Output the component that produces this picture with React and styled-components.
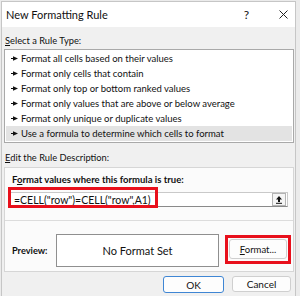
import React from "react";
import styled, { createGlobalStyle } from "styled-components";

const GlobalStyle = createGlobalStyle`
  html, body { margin: 0; padding: 0; background: #ebebeb; }
  body {
    width: 300px;
    height: 296px;
    overflow: hidden;
    font-family: Lato, "Noto Sans", sans-serif;
    color: #111;
  }
`;

const Window = styled.div`
  margin: 1px 0 0 1px;
  width: 295px;
  height: 295px;
  box-sizing: border-box;
  border: 1px solid #c6c6c6;
  border-bottom: none;
  background: #f0f0f0;
  display: flex;
  flex-direction: column;
`;

const TitleBar = styled.div`
  height: 25px;
  background: #fff;
  display: flex;
  align-items: center;
  padding-left: 4px;
`;

const Title = styled.div`
  font-size: 11px;
  flex: 1;
`;

const Help = styled.span`
  font-size: 12px;
  margin-right: 30px;
`;

const CloseIcon = styled.svg`
  width: 9px;
  height: 9px;
  margin-right: 7px;
`;

const Body = styled.div`
  flex: 1;
  padding: 0 1px 0 2px;
  display: flex;
  flex-direction: column;
`;

const SectionLabel = styled.div`
  font-size: 9.3px;
  line-height: 14px;
  margin-top: ${(p) => p.$top}px;
  margin-left: 1px;
`;

const Key = styled.span`
  text-decoration: underline;
  text-underline-offset: 1px;
`;

const ListBox = styled.div`
  margin-top: 1px;
  border: 1px solid #a9a9a9;
  background: #fff;
  padding: 1px;
`;

const ListRow = styled.div`
  height: 15px;
  display: flex;
  align-items: center;
  padding-left: 5px;
  font-size: 9.5px;
  background: ${(p) => (p.$selected ? "#e3e3e3" : "transparent")};
`;

const Arrow = styled.svg`
  width: 7px;
  height: 5px;
  margin-right: 3px;
  flex: none;
`;

const GroupBox = styled.div`
  margin-top: 2px;
  border: 1px solid #d6d6d6;
  background: #fbfbfb;
  display: flex;
  flex-direction: column;
`;

const FormulaSection = styled.div`
  padding: 5px 5px 13px 5px;
  border-bottom: 1px solid #dcdcdc;
`;

const BoldLabel = styled.div`
  font-size: 9.5px;
  font-weight: 700;
  line-height: 14px;
  padding-left: 2px;
`;

const FormulaRow = styled.div`
  position: relative;
  margin-top: 5px;
`;

const FormulaInput = styled.div`
  height: 15px;
  box-sizing: border-box;
  border: 1px solid #c9c9c9;
  border-bottom-color: #8a8a8a;
  background: #fff;
  display: flex;
  align-items: center;
  padding-left: 3px;
  font-size: 10.5px;
`;

const FormulaText = styled.span`
  flex: 1;
`;

const RefButton = styled.div`
  width: 14px;
  height: 13px;
  box-sizing: border-box;
  border: 1px solid #b3b3b3;
  background: #f5f5f5;
  display: flex;
  align-items: center;
  justify-content: center;
  margin-right: 1px;
`;

const RedMark = styled.div`
  position: absolute;
  left: -2px;
  top: -5px;
  width: 150px;
  height: 21px;
  box-sizing: border-box;
  border: 3px solid #e8101c;
  pointer-events: none;
`;

const PreviewSection = styled.div`
  display: flex;
  align-items: center;
  padding: 13px 0 4px 7px;
`;

const PreviewLabel = styled.div`
  width: 44px;
  font-size: 9.2px;
  font-weight: 700;
`;

const PreviewBox = styled.div`
  width: 163px;
  height: 33px;
  box-sizing: border-box;
  border: 1px solid #8f8f8f;
  background: #fff;
  display: flex;
  align-items: center;
  justify-content: center;
  font-size: 11px;
`;

const RedFrame = styled.div`
  margin-left: 6px;
  border: 3px solid #e8101c;
  padding: 1px 1px 2px 1px;
  margin-top: -2px;
`;

const Button = styled.div`
  width: ${(p) => p.$w}px;
  height: ${(p) => p.$h}px;
  box-sizing: border-box;
  border: 1px solid ${(p) => (p.$primary ? "#3f86d4" : "#cfcfcf")};
  border-radius: 3px;
  background: #fdfdfd;
  display: flex;
  align-items: center;
  justify-content: center;
  font-size: ${(p) => p.$size || 10}px;
`;

const Footer = styled.div`
  display: flex;
  justify-content: flex-end;
  gap: 8px;
  margin: 4px 3px 0 0;
`;

const rules = [
  "Format all cells based on their values",
  "Format only cells that contain",
  "Format only top or bottom ranked values",
  "Format only values that are above or below average",
  "Format only unique or duplicate values",
  "Use a formula to determine which cells to format",
];

function RuleArrow() {
  return (
    <Arrow viewBox="0 0 7 5">
      <path d="M0 2.5h2.5" stroke="#111" strokeWidth="1" />
      <path d="M2 0.3L7 2.5L2 4.7Z" fill="#111" />
    </Arrow>
  );
}

export default function App() {
  return (
    <>
      <GlobalStyle />
      <Window>
        <TitleBar>
          <Title>New Formatting Rule</Title>
          <Help>?</Help>
          <CloseIcon viewBox="0 0 9 9">
            <path d="M0.5 0.5L8.5 8.5M8.5 0.5L0.5 8.5" stroke="#222" strokeWidth="1" />
          </CloseIcon>
        </TitleBar>
        <Body>
          <SectionLabel $top={7}>
            <Key>S</Key>elect a Rule Type:
          </SectionLabel>
          <ListBox>
            {rules.map((r, i) => (
              <ListRow key={r} $selected={i === 5}>
                <RuleArrow />
                {r}
              </ListRow>
            ))}
          </ListBox>
          <SectionLabel $top={8}>
            <Key>E</Key>dit the Rule Description:
          </SectionLabel>
          <GroupBox>
            <FormulaSection>
              <BoldLabel>
                F<Key>o</Key>rmat values where this formula is true:
              </BoldLabel>
              <FormulaRow>
                <FormulaInput>
                  <FormulaText>=CELL("row")=CELL("row",A1)</FormulaText>
                  <RefButton>
                    <svg width="8" height="9" viewBox="0 0 8 9">
                      <path d="M4 1L1 4.5h2V7h2V4.5h2Z" fill="#111" />
                      <path d="M1 8.3h6" stroke="#111" strokeWidth="1" />
                    </svg>
                  </RefButton>
                </FormulaInput>
                <RedMark />
              </FormulaRow>
            </FormulaSection>
            <PreviewSection>
              <PreviewLabel>Preview:</PreviewLabel>
              <PreviewBox>No Format Set</PreviewBox>
              <RedFrame>
                <Button $w={58} $h={20} $size={9.5}>
                  <span>
                    <Key>F</Key>ormat...
                  </span>
                </Button>
              </RedFrame>
            </PreviewSection>
          </GroupBox>
          <Footer>
            <Button $w={61} $h={17} $primary>
              OK
            </Button>
            <Button $w={59} $h={16}>
              Cancel
            </Button>
          </Footer>
        </Body>
      </Window>
    </>
  );
}
